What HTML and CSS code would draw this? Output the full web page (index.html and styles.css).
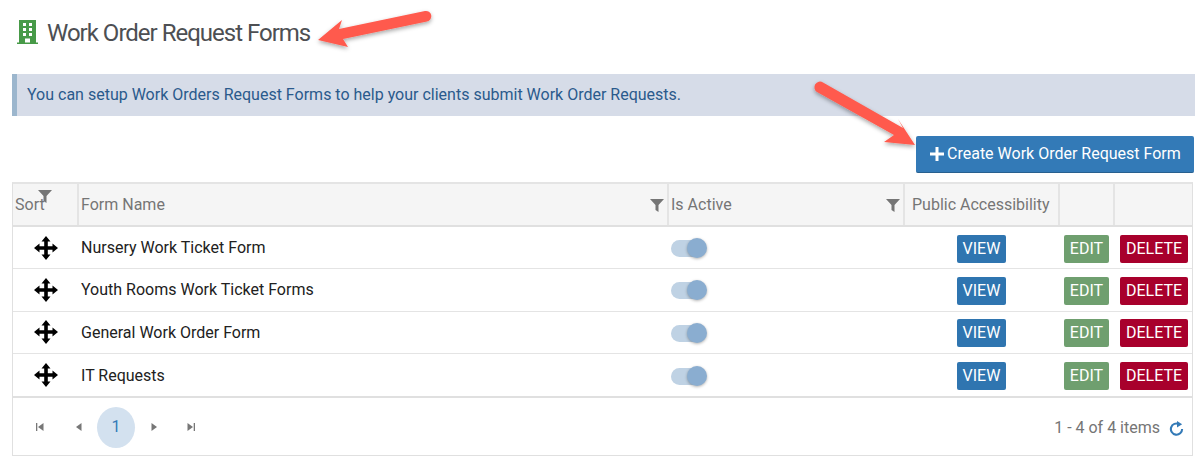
FILE: index.html
```html
<!DOCTYPE html>
<html lang="en">
<head>
<meta charset="utf-8">
<title>Work Order Request Forms</title>
<link rel="stylesheet" href="styles.css">
</head>
<body>
<main class="page">
  <header class="title-row">
    <svg class="building" viewBox="0 0 21 24" aria-hidden="true">
      <path fill="#479a48" d="M2 0h17v22.500h2V24H0v-1.500h2z"/>
      <path fill="#fff" d="M6 3h3v3H6zM12 3h3v3h-3zM6 8h3v3H6zM12 8h3v3h-3zM6 13h3v3H6zM12 13h3v3h-3zM8 18.500h5V22.500H8z"/>
    </svg>
    <h1 class="title">Work Order Request Forms</h1>
  </header>
  <p class="notice">You can setup Work Orders Request Forms to help your clients submit Work Order Requests.</p>
  <div class="actions">
    <button class="create-btn"><svg class="plus" viewBox="0 0 14 14" aria-hidden="true"><path d="M5.500 0h3v5.500H14v3H8.500V14h-3V8.500H0v-3h5.500z"/></svg>Create Work Order Request Form</button>
  </div>
  <section class="grid">
    <table class="table">
      <colgroup>
        <col class="c-sort"><col class="c-name"><col class="c-active"><col class="c-public"><col class="c-edit"><col class="c-delete">
      </colgroup>
      <thead>
        <tr>
          <th class="th-sort">Sort<svg class="filter filter-sort" viewBox="0 0 14 14" aria-hidden="true"><path d="M0 1h14L8.500 7v7l-3-2V7z"/></svg></th>
          <th><div class="th-flex">Form Name<svg class="filter" viewBox="0 0 14 14" aria-hidden="true"><path d="M0 1h14L8.500 7v7l-3-2V7z"/></svg></div></th>
          <th><div class="th-flex">Is Active<svg class="filter" viewBox="0 0 14 14" aria-hidden="true"><path d="M0 1h14L8.500 7v7l-3-2V7z"/></svg></div></th>
          <th class="th-public">Public Accessibility</th>
          <th></th>
          <th></th>
        </tr>
      </thead>
      <tbody>
        <tr class="row">
          <td class="center"><svg class="move" viewBox="0 0 24 24" aria-hidden="true"><path d="M12 0l4.500 5.500h-2.700v4.700h4.700V7.500L24 12l-5.500 4.500v-2.700h-4.700v4.700h2.700L12 24l-4.500-5.500h2.700v-4.700H5.500v2.700L0 12l5.500-4.500v2.700h4.700V5.500H7.500z"/></svg></td>
          <td>Nursery Work Ticket Form</td>
          <td><span class="switch"><span class="knob"></span></span></td>
          <td class="center"><a class="btn view">VIEW</a></td>
          <td class="center"><a class="btn edit">EDIT</a></td>
          <td class="center"><a class="btn del">DELETE</a></td>
        </tr>
        <tr class="row">
          <td class="center"><svg class="move" viewBox="0 0 24 24" aria-hidden="true"><path d="M12 0l4.500 5.500h-2.700v4.700h4.700V7.500L24 12l-5.500 4.500v-2.700h-4.700v4.700h2.700L12 24l-4.500-5.500h2.700v-4.700H5.500v2.700L0 12l5.500-4.500v2.700h4.700V5.500H7.500z"/></svg></td>
          <td>Youth Rooms Work Ticket Forms</td>
          <td><span class="switch"><span class="knob"></span></span></td>
          <td class="center"><a class="btn view">VIEW</a></td>
          <td class="center"><a class="btn edit">EDIT</a></td>
          <td class="center"><a class="btn del">DELETE</a></td>
        </tr>
        <tr class="row">
          <td class="center"><svg class="move" viewBox="0 0 24 24" aria-hidden="true"><path d="M12 0l4.500 5.500h-2.700v4.700h4.700V7.500L24 12l-5.500 4.500v-2.700h-4.700v4.700h2.700L12 24l-4.500-5.500h2.700v-4.700H5.500v2.700L0 12l5.500-4.500v2.700h4.700V5.500H7.500z"/></svg></td>
          <td>General Work Order Form</td>
          <td><span class="switch"><span class="knob"></span></span></td>
          <td class="center"><a class="btn view">VIEW</a></td>
          <td class="center"><a class="btn edit">EDIT</a></td>
          <td class="center"><a class="btn del">DELETE</a></td>
        </tr>
        <tr class="row">
          <td class="center"><svg class="move" viewBox="0 0 24 24" aria-hidden="true"><path d="M12 0l4.500 5.500h-2.700v4.700h4.700V7.500L24 12l-5.500 4.500v-2.700h-4.700v4.700h2.700L12 24l-4.500-5.500h2.700v-4.700H5.500v2.700L0 12l5.500-4.500v2.700h4.700V5.500H7.500z"/></svg></td>
          <td>IT Requests</td>
          <td><span class="switch"><span class="knob"></span></span></td>
          <td class="center"><a class="btn view">VIEW</a></td>
          <td class="center"><a class="btn edit">EDIT</a></td>
          <td class="center"><a class="btn del">DELETE</a></td>
        </tr>
      </tbody>
    </table>
    <footer class="pager">
      <div class="pages">
        <svg class="nav" viewBox="0 0 8 8" aria-hidden="true"><path d="M0 0h1.300v8H0zM7.500 0v8L2 4z"/></svg>
        <svg class="nav" viewBox="0 0 8 8" aria-hidden="true"><path d="M6.500 0v8L1 4z"/></svg>
        <span class="current">1</span>
        <svg class="nav" viewBox="0 0 8 8" aria-hidden="true"><path d="M1.500 0v8L7 4z"/></svg>
        <svg class="nav" viewBox="0 0 8 8" aria-hidden="true"><path d="M6.700 0H8v8H6.700zM.5 0v8L6 4z"/></svg>
      </div>
      <div class="info">1 - 4 of 4 items
        <svg class="refresh" viewBox="0 0 16 16" aria-hidden="true"><path fill="none" stroke="#337ab7" stroke-width="2.200" d="M10.800 3.300A6 6 0 1 0 14 8.500"/><path fill="#337ab7" d="M8.500 0l5.500 3.500-5.500 3.500z"/></svg>
      </div>
    </footer>
  </section>
</main>
<svg class="arrows" viewBox="0 0 1195 461" aria-hidden="true">
  <defs>
    <filter id="arrow-shadow" x="-20%" y="-20%" width="140%" height="150%">
      <feDropShadow dx="0" dy="2" stdDeviation="2" flood-color="#000" flood-opacity=".35"/>
    </filter>
  </defs>
  <g filter="url(#arrow-shadow)" fill="#ff5a4d">
    <path d="M318 40L342 20 339 29 425 11a5 5 0 0 1 2 10.500L343 39 348 47z"/>
    <path d="M915 145L884 142 894 135 817 92a5 5 0 0 1 6-9.500L903 128 898 119z"/>
  </g>
</svg>
</body>
</html>
```
FILE: styles.css
```css
* { box-sizing: border-box; }
html, body { margin: 0; padding: 0; background: #fff; }
body {
  width: 1195px;
  height: 461px;
  overflow: hidden;
  position: relative;
  font-family: Roboto, "Liberation Sans", sans-serif;
}
.page { padding-top: 19px; padding-left: 12px; }
.title-row { display: flex; align-items: center; height: 25px; padding-left: 5px; }
.building { width: 21px; height: 24px; flex: none; }
.title {
  margin: 3px 0 0 9px;
  font-size: 24px;
  font-weight: 400;
  letter-spacing: -1px;
  color: #4d4f53;
  line-height: 25px;
}
.notice {
  margin: 30px 0 0;
  height: 42px;
  line-height: 42px;
  padding-left: 10px;
  background: #d6dce8;
  border-left: 5px solid #9cb6cd;
  color: #2a5a8c;
  font-size: 16px;
}
.actions { display: flex; justify-content: flex-end; margin: 20px 1px 9px 0; }
.create-btn {
  display: flex;
  align-items: center;
  height: 37px;
  width: 278px;
  padding: 0 0 1px 14px;
  border: 0;
  border-bottom: 1px solid #28608f;
  border-radius: 2px;
  background: #337ab7;
  color: #fff;
  font: 400 16px Roboto, "Liberation Sans", sans-serif;
}
.plus { width: 14px; height: 14px; fill: #fff; margin-right: 3px; }
.grid {
  width: 1181px;
  height: 274px;
  border: 1px solid #e0e0e0;
  border-top-width: 2px;
  border-top-color: #e4e4e4;
}
.table { width: 100%; border-collapse: collapse; table-layout: fixed; }
.c-sort { width: 65px; }
.c-name { width: 590px; }
.c-active { width: 236px; }
.c-public { width: 155px; }
.c-edit { width: 55px; }
th {
  height: 42px;
  padding: 0 3px 0 2px;
  background: #f5f5f5;
  border-left: 2px solid #e4e4e4;
  border-bottom: 2px solid #e0e0e0;
  color: #757575;
  font-size: 16px;
  font-weight: 400;
  text-align: left;
}
th:first-child { border-left: 0; padding-left: 2px; position: relative; }
.th-flex { display: flex; justify-content: space-between; align-items: center; }
.th-public { padding-left: 7px; white-space: nowrap; }
.filter { width: 14px; height: 14px; fill: #757575; flex: none; }
.filter-sort { position: absolute; left: 25px; top: 5px; }
.row { height: 42.500px; }
.row:last-child { height: 43.500px; }
td {
  padding: 0 0 0 3px;
  border-bottom: 1px solid #e4e4e4;
  font-size: 16px;
  color: #212121;
}
.row:last-child td { border-bottom: 2px solid #e0e0e0; }
.center { text-align: center; padding: 0; }
.move { width: 24px; height: 24px; display: inline-block; vertical-align: middle; fill: #000; }
.switch {
  display: inline-block;
  position: relative;
  width: 32px;
  height: 17px;
  vertical-align: middle;
  border-radius: 9px;
  background: #bfd2e4;
}
.knob {
  position: absolute;
  right: -4px;
  top: -2px;
  width: 20px;
  height: 20px;
  border-radius: 50%;
  background: #8aadd0;
  box-shadow: 0 1px 3px rgba(0,0,0,.3);
}
.btn {
  display: inline-block;
  height: 28px;
  line-height: 27px;
  margin-top: 2px;
  border-radius: 2px;
  color: #fff;
  font-size: 16px;
  font-weight: 400;
  text-align: center;
  vertical-align: middle;
}
.view { width: 49px; background: #2f75b0; }
.edit { width: 45px; background: #6f9f6f; }
.del { width: 68px; margin-left: 2px; background: #a8002c; }
.pager {
  display: flex;
  justify-content: space-between;
  align-items: center;
  height: 58px;
  padding: 0 8px 0 23px;
}
.pages { display: flex; align-items: center; }
.nav { width: 8px; height: 8px; fill: #777; }
.pages .nav:nth-child(2) { margin-left: 31px; margin-right: 14px; }
.pages .nav:nth-child(4) { margin-left: 15px; margin-right: 29px; }
.current {
  width: 38px;
  height: 41px;
  line-height: 39px;
  border-radius: 50%;
  background: #d3e1ef;
  color: #337ab7;
  text-align: center;
  font-size: 16px;
}
.info { display: flex; align-items: center; gap: 9px; color: #757575; font-size: 16px; }
.refresh { width: 15px; height: 15px; margin-top: 2px; }
.arrows { position: absolute; left: 0; top: 0; width: 1195px; height: 461px; pointer-events: none; }
```
